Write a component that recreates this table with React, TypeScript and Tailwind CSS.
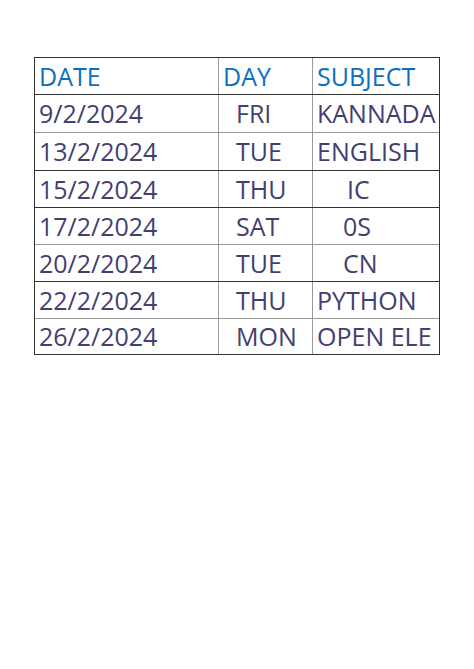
const ROWS = [
  { date: 'DATE', day: 'DAY', subject: 'SUBJECT', header: true, h: 'h-[36px]', line: 'border-[#333333]', dayPad: 'pl-[4px]', subPad: 'pl-[4px]' },
  { date: '9/2/2024', day: 'FRI', subject: 'KANNADA', h: 'h-[37px]', line: 'border-[#9a9a9a]', dayPad: 'pl-[17px]', subPad: 'pl-[4px]' },
  { date: '13/2/2024', day: 'TUE', subject: 'ENGLISH', h: 'h-[37px]', line: 'border-[#333333]', dayPad: 'pl-[17px]', subPad: 'pl-[4px]' },
  { date: '15/2/2024', day: 'THU', subject: 'IC', h: 'h-[36px]', line: 'border-[#333333]', dayPad: 'pl-[17px]', subPad: 'pl-[34px]' },
  { date: '17/2/2024', day: 'SAT', subject: '0S', h: 'h-[36px]', line: 'border-[#9a9a9a]', dayPad: 'pl-[17px]', subPad: 'pl-[30px]' },
  { date: '20/2/2024', day: 'TUE', subject: 'CN', h: 'h-[36px]', line: 'border-[#333333]', dayPad: 'pl-[17px]', subPad: 'pl-[30px]' },
  { date: '22/2/2024', day: 'THU', subject: 'PYTHON', h: 'h-[36px]', line: 'border-[#9a9a9a]', dayPad: 'pl-[17px]', subPad: 'pl-[4px]' },
  { date: '26/2/2024', day: 'MON', subject: 'OPEN ELE', h: 'h-[35px]', line: 'border-transparent', dayPad: 'pl-[17px]', subPad: 'pl-[4px]' },
];

export default function App() {
  return (
    <div className="w-[474px] h-[669px] bg-white pt-[57px] pl-[34px] font-['Open_Sans',sans-serif]">
      <div className="w-[406px] border border-[#333333]">
        {ROWS.map((row, i) => (
          <div
            key={i}
            className={`flex ${i < ROWS.length - 1 ? 'border-b' : ''} ${row.line} ${
              row.header ? 'text-[#0b6fc0]' : 'text-[#433f70]'
            } text-[25px] leading-none`}
          >
            <div className={`w-[184px] ${row.h} border-r border-[#9a9a9a] flex items-center pl-[4px]`}>
              {row.date}
            </div>
            <div className={`w-[94px] ${row.h} border-r border-[#9a9a9a] flex items-center ${row.dayPad}`}>
              {row.day}
            </div>
            <div className={`flex-1 ${row.h} flex items-center ${row.subPad} whitespace-nowrap`}>
              {row.subject}
            </div>
          </div>
        ))}
      </div>
    </div>
  );
}
